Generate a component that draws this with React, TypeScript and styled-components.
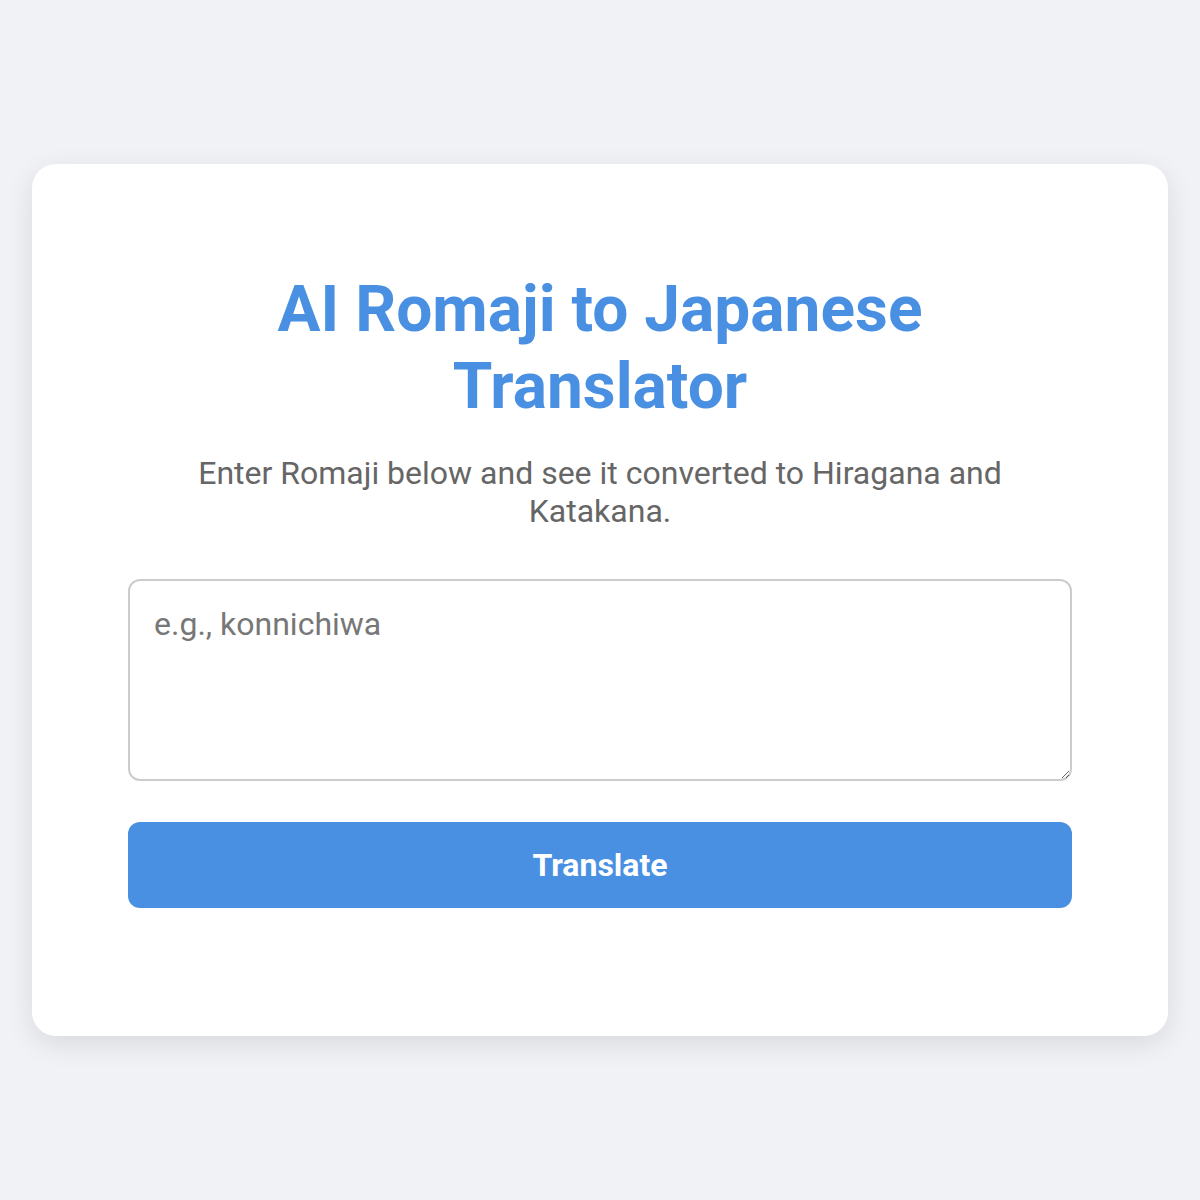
import React, { useState } from 'react';
import styled, { createGlobalStyle } from 'styled-components';

const GlobalStyle = createGlobalStyle`
  html, body {
    margin: 0;
    padding: 0;
  }
  body {
    background: #f0f2f5;
    font-family: Roboto, "Liberation Sans", Arial, sans-serif;
  }
  * {
    box-sizing: border-box;
  }
`;

const App: React.FC = () => {
  const [romaji, setRomaji] = useState<string>('');

  return (
    <>
      <GlobalStyle />
      <Page>
        <Card>
          <Title>AI Romaji to Japanese Translator</Title>
          <Subtitle>Enter Romaji below and see it converted to Hiragana and Katakana.</Subtitle>
          <RomajiInput
            placeholder="e.g., konnichiwa"
            value={romaji}
            onChange={(e) => setRomaji(e.target.value)}
          />
          <TranslateButton type="button">Translate</TranslateButton>
        </Card>
      </Page>
    </>
  );
};

const Page = styled.div`
  min-height: 100vh;
  display: flex;
  align-items: center;
  justify-content: center;
  padding: 0 32px;
`;

const Card = styled.div`
  width: 100%;
  background: #ffffff;
  border-radius: 24px;
  box-shadow: 0 8px 28px rgba(0, 0, 0, 0.1);
  padding: 108px 96px 128px;
  display: flex;
  flex-direction: column;
  align-items: stretch;
  text-align: center;
`;

const Title = styled.h1`
  margin: 0;
  font-size: 64px;
  line-height: 1.2;
  font-weight: 700;
  color: #4a90e2;
  padding: 0 120px;
`;

const Subtitle = styled.p`
  margin: 28px 0 0;
  font-size: 32px;
  line-height: 1.2;
  color: #666666;
`;

const RomajiInput = styled.textarea`
  display: block;
  width: 100%;
  height: 202px;
  margin-top: 48px;
  padding: 24px;
  border: 2px solid #cccccc;
  border-radius: 12px;
  font-family: Roboto, "Liberation Sans", Arial, sans-serif;
  font-size: 32px;
  line-height: normal;
  color: #333333;
  resize: vertical;
  outline: none;

  &::placeholder {
    color: #777777;
  }
`;

const TranslateButton = styled.button`
  margin-top: 41px;
  height: 86px;
  width: 100%;
  border: none;
  border-radius: 12px;
  background: #4a90e2;
  color: #ffffff;
  font-family: Roboto, "Liberation Sans", Arial, sans-serif;
  font-size: 32px;
  font-weight: 700;
  cursor: pointer;
`;

export default App;
